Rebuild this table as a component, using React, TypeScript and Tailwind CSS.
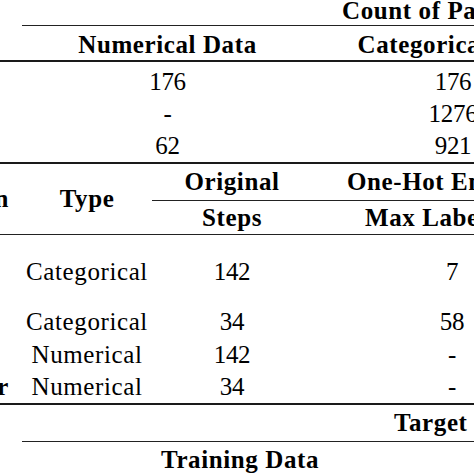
export default function App() {
  const topRows = [
    { num: '176', cat: '176' },
    { num: '-', cat: '1276' },
    { num: '62', cat: '921' },
  ];

  const featureRows = [
    { label: '', type: 'Categorical', steps: '142', max: '7', cls: 'mt-[20px] h-[33px]' },
    { label: '', type: 'Categorical', steps: '34', max: '58', cls: 'mt-[17px] h-[33px]' },
    { label: '', type: 'Numerical', steps: '142', max: '-', cls: 'h-[33px]' },
    { label: 'Power', type: 'Numerical', steps: '34', max: '-', cls: 'h-[32px]' },
  ];

  return (
    <div className="w-[474px] h-[474px] overflow-hidden bg-white text-black text-[25px] tracking-[0.6px] font-['Liberation_Serif','Times_New_Roman',serif]">
      <div className="w-[720px] flex flex-col">
        {/* parameter count table */}
        <div className="h-[25px] pb-[4px] flex items-center whitespace-nowrap font-bold">
          <span className="pl-[342px]">Count of Parameters</span>
        </div>
        <div className="h-px ml-[22px] bg-[#222]" />
        <div className="h-[34px] pt-[4px] flex items-center font-bold whitespace-nowrap">
          <div className="w-[22px] shrink-0" />
          <div className="w-[291px] shrink-0 text-center">Numerical Data</div>
          <div className="w-[280px] shrink-0 text-center">Categorical Data</div>
        </div>
        <div className="h-[2px] bg-[#1a1a1a]" />
        <div className="pt-[4px] flex flex-col">
          {topRows.map((r, i) => (
            <div key={i} className="h-[32px] flex items-center tracking-[-0.3px]">
              <div className="w-[22px] shrink-0" />
              <div className="w-[291px] shrink-0 text-center">{r.num}</div>
              <div className="w-[280px] shrink-0 text-center">{r.cat}</div>
            </div>
          ))}
        </div>
        <div className="h-[2px] bg-[#1a1a1a]" />

        {/* feature table */}
        <div className="h-[70px] flex font-bold whitespace-nowrap">
          <div className="w-[22px] shrink-0 flex items-center justify-end pr-[13px]">Station</div>
          <div className="w-[130px] shrink-0 flex items-center justify-center">Type</div>
          <div className="flex-1 flex flex-col">
            <div className="h-[36px] flex items-center">
              <div className="w-[160px] shrink-0 text-center">Original</div>
              <div className="pl-[35px]">One-Hot Encoding</div>
            </div>
            <div className="h-px bg-[#222]" />
            <div className="h-[33px] flex items-center">
              <div className="w-[160px] shrink-0 text-center">Steps</div>
              <div className="pl-[53px]">Max Label Count</div>
            </div>
          </div>
        </div>
        <div className="h-px bg-[#222]" />
        {featureRows.map((r, i) => (
          <div key={i} className={`${r.cls} flex items-center whitespace-nowrap`}>
            <div className="w-[22px] shrink-0 flex justify-end pr-[13px] font-bold">{r.label}</div>
            <div className="w-[130px] shrink-0 text-center">{r.type}</div>
            <div className="w-[160px] shrink-0 text-center tracking-[-0.3px]">{r.steps}</div>
            <div className="w-[280px] shrink-0 text-center tracking-[-0.3px]">{r.max}</div>
          </div>
        ))}
        <div className="h-[2px] bg-[#1a1a1a]" />

        {/* target table */}
        <div className="h-[36px] flex items-center font-bold whitespace-nowrap">
          <span className="pl-[394px]">Target Data</span>
        </div>
        <div className="h-px ml-[22px] bg-[#222]" />
        <div className="h-[36px] flex items-center font-bold whitespace-nowrap">
          <div className="ml-[22px] w-[436px] shrink-0 text-center">Training Data</div>
        </div>
      </div>
    </div>
  );
}
